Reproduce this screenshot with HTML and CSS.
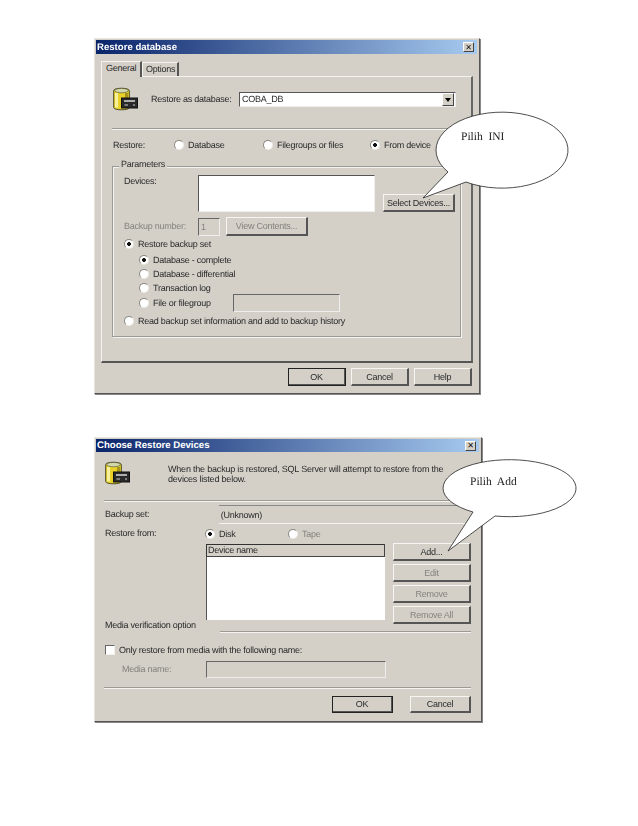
FILE: index.html
```html
<!DOCTYPE html>
<html lang="en">
<head>
<meta charset="utf-8">
<title>Restore database</title>
<link rel="stylesheet" href="styles.css">
</head>
<body>
<svg class="defs" width="0" height="0" aria-hidden="true">
  <symbol id="db" viewBox="0 0 25 24">
    <path d="M.7 3.5C.7 .5 16.3 .5 16.3 3.5V20.5C16.3 23.6 .7 23.6 .7 20.5Z" fill="#e8d22a" stroke="#4a4a24" stroke-width="1"/>
    <path d="M3.5 6V20.5" stroke="#f9f09a" stroke-width="3"/>
    <path d="M13.5 6V21" stroke="#a8941a" stroke-width="3"/>
    <ellipse cx="8.5" cy="3.6" rx="6.8" ry="2.2" fill="#d3d8ac" stroke="#5a5a3c" stroke-width=".7"/>
    <rect x="8.5" y="11" width="16" height="10" fill="#2a2a2a" stroke="#111"/>
    <path d="M11 14H22" stroke="#e8e8e8" stroke-width="1.4"/>
    <path d="M11.5 18H15M20 18H22" stroke="#999" stroke-width="1.6"/>
  </symbol>
</svg>

<main class="page">
  <section class="window window-restore">
    <header class="title"><span>Restore database</span><span class="close">✕</span></header>
    <div class="tabs">
      <span class="tab tab-active">General</span>
      <span class="tab">Options</span>
    </div>
    <div class="panel">
      <div class="db-row">
        <svg class="icon"><use href="#db"/></svg>
        <span class="db-label">Restore as database:</span>
        <div class="combo"><span>COBA_DB</span><span class="combo-btn"></span></div>
      </div>
      <div class="rule rule-restore"></div>
      <div class="restore-row">
        <span class="restore-label">Restore:</span>
        <label class="opt opt-a"><i class="radio"></i>Database</label>
        <label class="opt opt-b"><i class="radio"></i>Filegroups or files</label>
        <label class="opt"><i class="radio on"></i>From device</label>
      </div>
      <div class="group">
        <div class="legend">Parameters</div>
        <div class="devices-row">
          <span>Devices:</span>
          <div class="listbox"></div>
          <button class="btn btn-select">Select Devices...</button>
        </div>
        <div class="backup-row muted">
          <span>Backup number:</span>
          <div class="num-input">1</div>
          <button class="btn btn-view muted">View Contents...</button>
        </div>
        <label class="opt line line-set"><i class="radio on"></i>Restore backup set</label>
        <div class="sub">
          <label class="opt line"><i class="radio on"></i>Database - complete</label>
          <label class="opt line"><i class="radio"></i>Database - differential</label>
          <label class="opt line"><i class="radio"></i>Transaction log</label>
          <label class="opt line line-file"><i class="radio"></i><span class="file-label">File or filegroup</span><span class="file-input"></span></label>
        </div>
        <label class="opt line line-read"><i class="radio"></i>Read backup set information and add to backup history</label>
      </div>
    </div>
    <footer class="footer footer-restore">
      <button class="btn btn-main btn-default">OK</button>
      <button class="btn btn-main">Cancel</button>
      <button class="btn btn-main">Help</button>
    </footer>
  </section>

  <section class="window window-devices">
    <header class="title title-devices"><span>Choose Restore Devices</span><span class="close">✕</span></header>
    <div class="content">
      <div class="intro">
        <svg class="icon"><use href="#db"/></svg>
        <p>When the backup is restored, SQL Server will attempt to restore from the<br>devices listed below.</p>
      </div>
      <div class="rule rule-intro"></div>
      <div class="set-row"><span>Backup set:</span><div class="set-field">(Unknown)</div></div>
      <div class="from-row">
        <span class="from-label">Restore from:</span>
        <label class="opt opt-disk"><i class="radio on"></i>Disk</label>
        <label class="opt muted"><i class="radio"></i>Tape</label>
      </div>
      <div class="device-grid">
        <div class="device-list">
          <div class="device-head">Device name</div>
          <div class="device-body"></div>
        </div>
        <div class="device-btns">
          <button class="btn btn-side btn-add">Add...</button>
          <button class="btn btn-side muted">Edit</button>
          <button class="btn btn-side muted">Remove</button>
          <button class="btn btn-side muted">Remove All</button>
        </div>
      </div>
      <div class="verify-row"><span>Media verification option</span><div class="rule verify-rule"></div></div>
      <label class="opt check-row"><i class="check"></i>Only restore from media with the following name:</label>
      <div class="media-row"><span class="muted">Media name:</span><div class="media-input"></div></div>
      <div class="rule rule-bottom"></div>
      <footer class="footer footer-devices">
        <button class="btn btn-foot btn-default">OK</button>
        <button class="btn btn-foot">Cancel</button>
      </footer>
    </div>
  </section>
</main>

<svg class="callout callout-ini" viewBox="420 110 150 92">
  <path d="M448 172A66 38 0 1 1 466 182L423 198Z"/>
  <text x="461" y="140">Pilih  INI</text>
</svg>
<svg class="callout callout-add" viewBox="440 458 140 96">
  <path d="M473 512A66.5 28.5 0 1 1 495 516L448 551Z"/>
  <text x="470" y="485">Pilih  Add</text>
</svg>
</body>
</html>
```
FILE: styles.css
```css
* { box-sizing: border-box; }
html, body { margin: 0; background: #fff; }
body { position: relative; width: 638px; height: 826px; overflow: hidden; font: 9px/1.2 "Liberation Sans", Arial, sans-serif; letter-spacing: -.25px; color: #2a2a2a; text-rendering: geometricPrecision; white-space: nowrap; }
.defs { position: absolute; }
.page { padding: 38px 0 0 94px; }

.window {
  background: #d4d0c8;
  border: 1px solid; border-color: #e8e6e0 #555 #555 #e8e6e0;
  box-shadow: 1px 1px 0 #888;
  padding: 1px;
  filter: blur(.4px);
}
.window-restore { width: 386px; height: 356px; }
.window-devices { width: 388px; height: 285px; margin-top: 43px; }

.title {
  height: 14px; margin: 0 1px 0 0; padding: 0 3px 0 1px;
  display: flex; align-items: center; justify-content: space-between;
  background: linear-gradient(90deg, #0a246a, #a6caf0);
  color: #fff; font: bold 9.6px "Liberation Sans", sans-serif; letter-spacing: 0;
}
.title-devices { height: 13px; }
.close {
  width: 11px; height: 10px; display: flex; align-items: center; justify-content: center;
  background: #d4d0c8; color: #111; font: bold 8px "DejaVu Sans", sans-serif;
  border: 1px solid; border-color: #fff #444 #444 #fff;
}

.tabs { display: flex; align-items: flex-end; height: 20px; margin-top: 2px; padding-left: 5px; }
.tab { height: 14px; padding: 1px 3px; width: 37px; border: 1px solid; border-width: 1px 2px 0 1px; border-color: #f4f3ef #555 #d4d0c8 #f4f3ef; }
.tab-active { width: 41px; height: 16px; padding: 1px 4px; background: #d4d0c8; position: relative; top: 1px; }

.panel {
  width: 372px; height: 287px; margin-left: 5px; padding: 10px 0 0 10px;
  border: 1px solid; border-color: #f4f3ef #666 #555 #f4f3ef; border-width: 1px 2px 2px 1px;
}
.db-row { display: flex; align-items: center; height: 24px; padding-left: 1px; }
.icon { width: 25px; height: 24px; flex: none; }
.db-label { width: 88px; margin-left: 13px; }
.combo {
  width: 217px; height: 15px; padding: 0 1px 0 2px; background: #fff;
  display: flex; align-items: center; justify-content: space-between;
  border: 1px solid; border-color: #555 #eee #eee #555;
}
.combo-btn { width: 12px; height: 13px; background: #d4d0c8; border: 1px solid; border-color: #fff #444 #444 #fff; position: relative; }
.combo-btn::after { content: ""; position: absolute; left: 2px; top: 4px; border: 3px solid transparent; border-top: 4px solid #000; border-bottom: 0; }

.rule { height: 2px; border-top: 1px solid #9c9a94; border-bottom: 1px solid #f4f3ef; }
.rule-restore { width: 349px; margin-top: 17px; }
.restore-row { display: flex; align-items: center; height: 16px; margin-top: 7px; padding-left: 1px; }
.restore-label { width: 61px; }
.opt { display: flex; align-items: center; }
.opt-a { width: 89px; }
.opt-b { width: 107px; }
.radio {
  flex: none; width: 10px; height: 10px; margin-right: 4px; border-radius: 50%;
  background: #fff; border: 1.5px solid; border-color: #8a8883 #eceae5 #eceae5 #8a8883;
}
.radio.on { background: radial-gradient(circle, #111 0 1.6px, #fff 2.2px); }
.check { flex: none; width: 10px; height: 10px; margin-right: 4px; background: #fff; border: 1.5px solid; border-color: #666 #f2f1ec #f2f1ec #666; }

.group {
  width: 349px; height: 171px; margin-top: 13px; padding-left: 11px;
  border: 1px solid #9c9a94; box-shadow: 1px 1px 0 #f4f3ef, inset 1px 1px 0 #f4f3ef;
}
.legend { width: fit-content; height: 14px; margin: -8px 0 0 -5px; padding: 0 2px; background: #d4d0c8; }
.devices-row { display: grid; grid-template-columns: 74px 177px 80px; height: 37px; margin-top: 2px; }
.devices-row > span { padding-top: 1px; }
.devices-row .btn-select { margin-left: 8px; width: 72px; align-self: end; height: 18px; }
.listbox { background: #fff; border: 1px solid; border-color: #555 #eee #eee #555; }
.btn {
  display: block; padding: 0; font: 9px "Liberation Sans", Arial, sans-serif; letter-spacing: -.25px; color: #2a2a2a; background: #d4d0c8;
  border: 1px solid; border-width: 1px 2px 2px 1px; border-color: #f6f5f1 #555 #555 #f6f5f1;
}
.muted { color: #85837d; }
.btn.muted { color: #85837d; }
.backup-row { display: flex; align-items: center; height: 19px; margin-top: 5px; }
.backup-row > span { width: 74px; }
.num-input { width: 22px; height: 18px; padding-left: 2px; line-height: 16px; border: 1px solid; border-color: #666 #eee #eee #666; }
.btn-view { width: 82px; height: 19px; margin-left: 6px; }
.line { height: 14px; }
.line-set { height: 16px; }
.sub { margin-left: 15px; margin-top: 1px; }
.line-file { height: 18px; margin-top: -1px; }
.file-label { width: 80px; }
.file-input { width: 107px; height: 18px; border: 1px solid; border-color: #666 #eee #eee #666; }
.line-read { height: 16px; margin-top: 1px; }

.footer { display: flex; justify-content: flex-end; }
.footer-restore { gap: 5px; margin: 5px 6px 0 0; }
.btn-main { width: 58px; height: 18px; }
.btn-default { outline: 1px solid #222; outline-offset: -1px; }

.content { padding: 9px 9px 0 8px; }
.intro { display: flex; height: 31px; align-items: flex-start; padding-left: 1px; }
.intro p { margin: 3px 0 0 38px; line-height: 10px; letter-spacing: -.2px; }
.rule-intro { margin-top: 8px; }
.set-row { display: flex; align-items: center; height: 19px; margin-top: 3px; padding-left: 1px; }
.set-row span { width: 114px; }
.set-field { width: 253px; height: 19px; padding-left: 2px; line-height: 18px; border-top: 1px solid #888; border-bottom: 1px solid #f4f3ef; }
.from-row { display: flex; align-items: center; height: 16px; margin-top: 2px; padding-left: 1px; }
.from-label { width: 100px; position: relative; top: -1px; }
.opt-disk { width: 83px; }
.device-grid { display: grid; grid-template-columns: 179px 78px; column-gap: 8px; height: 83px; margin: 1px 0 0 102px; }
.device-list { display: flex; flex-direction: column; height: 76px; margin-top: 1px; }
.device-head { height: 13px; padding: 0 1px; line-height: 11px; border: 1px solid; border-color: #333 #444 #444 #333; }
.device-body { flex: 1; background: #fff; border-left: 1px solid #555; }
.device-btns { display: flex; flex-direction: column; gap: 3px; }
.btn-side { height: 18px; width: 78px; }
.verify-row { display: flex; align-items: flex-end; height: 12px; margin-top: -5px; padding-left: 1px; }
.verify-row > span { width: 115px; padding-bottom: 2px; }
.verify-rule { flex: 1; }
.check-row { height: 16px; margin: 9px 0 0 1px; }
.media-row { display: flex; align-items: center; height: 17px; margin-top: 3px; padding-left: 18px; }
.media-row > span { width: 84px; }
.media-input { width: 180px; height: 17px; border: 1px solid; border-color: #666 #eee #eee #666; }
.rule-bottom { margin-top: 9px; }
.footer-devices { gap: 17px; margin: 7px 0 0 0; }
.btn-foot { width: 61px; height: 17px; }

.callout { position: absolute; overflow: visible; }
.callout path { fill: #fff; stroke: #222; stroke-width: .8; }
.callout text { font: 11.5px "Liberation Serif", serif; letter-spacing: 0; fill: #222; white-space: pre; }
.callout-ini { left: 420px; top: 110px; width: 150px; height: 92px; }
.callout-add { left: 440px; top: 458px; width: 140px; height: 96px; }
```
